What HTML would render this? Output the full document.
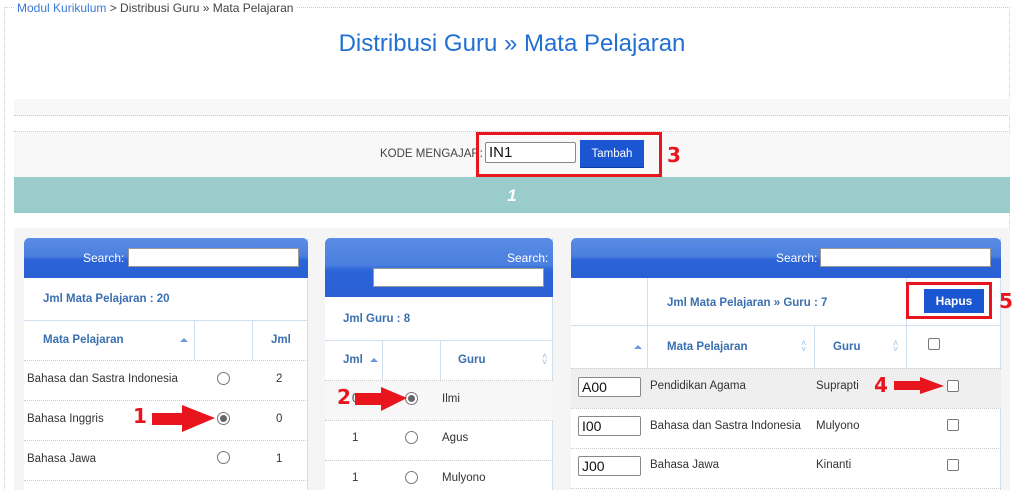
<!DOCTYPE html>
<html style="width:1024px;height:490px;overflow:hidden"><head><meta charset="utf-8">
<style>
*{box-sizing:border-box;margin:0;padding:0}
body{width:1024px;height:490px;overflow:hidden;background:#fff;font-family:"Liberation Sans",Arial,sans-serif;position:relative;font-size:12px;color:#333}
.a{position:absolute}
.hdr{background:linear-gradient(#5a8ce3 0%,#4c80e0 45%,#2c63d8 55%,#2a60d4 100%);border-radius:5px 5px 0 0}
.srch{color:#fff;font-size:12px}
.inp{background:#fff;border:1px solid #999}
.bl{color:#3a6fb0;font-weight:bold;font-size:11.5px}
.vl{border-left:1px solid #cfe0f0}
.dl{border-top:1px dotted #ccc}
.t{font-size:11.5px;color:#333}
.rad{width:13px;height:13px;border:1px solid #777;border-radius:50%;background:#fff}
.rad.on::after{content:"";position:absolute;left:2px;top:2px;width:7px;height:7px;border-radius:50%;background:#666}
.cb{width:12px;height:12px;border:1px solid #777;border-radius:2px;background:#fff}
.red{color:#e8141e;font-weight:bold;font-size:20px;font-family:"DejaVu Sans","Liberation Sans",sans-serif}
.tb{font-size:16px;color:#111;padding:2px 3px;border:1px solid #888;border-radius:2px;background:#fff}
</style></head><body>
<div class="a" style="left:4px;top:7px;width:1006px;height:483px;border:1px dotted #ccc;border-bottom:0"></div>
<div class="a" style="left:14px;top:1px;background:#fff;padding:0 3px;font-size:12px;color:#444"><span style="color:#3b79d8">Modul Kurikulum</span> &gt; Distribusi Guru » Mata Pelajaran</div>
<div class="a" style="left:0;width:1024px;top:30px;text-align:center;font-size:24px;color:#2270d4">Distribusi Guru » Mata Pelajaran</div>
<div class="a" style="left:14px;top:99px;width:996px;height:17px;background:#f8f8f8;border-bottom:1px dotted #ccc"></div>
<div class="a" style="left:14px;top:131px;width:996px;height:46px;background:#f8f8f8;border-top:1px dotted #ccc"></div>
<div class="a" style="left:380px;top:148px;font-size:11.5px;color:#444">KODE MENGAJAR:</div>
<div class="a tb" style="left:485px;top:142px;width:91px;height:21px;line-height:15px;font-size:15px">IN1</div>
<div class="a" style="left:580px;top:140px;width:64px;height:28px;background:#1a56d2;color:#fff;font-size:11.5px;text-align:center;line-height:28px;border-bottom:1px solid #0d3fa0">Tambah</div>
<div class="a" style="left:476px;top:132px;width:186px;height:45px;border:3px solid #e8141e"></div>
<div class="a red" style="left:667px;top:143px">3</div>
<div class="a" style="left:14px;top:177px;width:996px;height:36px;background:#9bcccc;color:#fff;font-weight:bold;font-style:italic;font-size:17px;text-align:center;line-height:38px">1</div>
<div class="a" style="left:14px;top:228px;width:996px;height:270px;background:#f5f5f5"></div>

<!-- left panel -->
<div class="a" style="left:24px;top:238px;width:284px;height:260px;background:#fff;border-right:1px solid #cfe0f0"></div>
<div class="a hdr" style="left:24px;top:238px;width:284px;height:40px"></div>
<div class="a srch" style="left:83px;top:251px">Search:</div>
<div class="a inp" style="left:128px;top:248px;width:171px;height:19px"></div>
<div class="a bl" style="left:43px;top:293px">Jml Mata Pelajaran : 20</div>
<div class="a" style="left:24px;top:320px;width:284px;border-top:1px solid #cfe0f0"></div>
<div class="a bl" style="left:43px;top:334px">Mata Pelajaran</div>
<div class="a" style="left:180px;top:338px;border:4px solid transparent;border-bottom:4px solid #6a9ad8;border-top:0"></div>
<div class="a vl" style="left:194px;top:320px;height:40px"></div>
<div class="a vl" style="left:252px;top:320px;height:40px"></div>
<div class="a bl" style="left:271px;top:334px">Jml</div>
<div class="a dl" style="left:24px;top:360px;width:284px"></div>
<div class="a t" style="left:27px;top:373px">Bahasa dan Sastra Indonesia</div>
<div class="a rad" style="left:217px;top:372px"></div>
<div class="a t" style="left:276px;top:373px">2</div>
<div class="a dl" style="left:24px;top:400px;width:284px"></div>
<div class="a t" style="left:27px;top:413px">Bahasa Inggris</div>
<div class="a rad on" style="left:217px;top:412px"></div>
<div class="a t" style="left:276px;top:413px">0</div>
<div class="a dl" style="left:24px;top:440px;width:284px"></div>
<div class="a t" style="left:27px;top:453px">Bahasa Jawa</div>
<div class="a rad" style="left:217px;top:451px"></div>
<div class="a t" style="left:276px;top:453px">1</div>
<div class="a dl" style="left:24px;top:480px;width:284px"></div>
<div class="a red" style="left:133px;top:404px">1</div>

<!-- middle panel -->
<div class="a" style="left:325px;top:238px;width:228px;height:260px;background:#fff;border-right:1px solid #cfe0f0"></div>
<div class="a hdr" style="left:325px;top:238px;width:228px;height:59px"></div>
<div class="a srch" style="left:507px;top:251px">Search:</div>
<div class="a inp" style="left:373px;top:268px;width:171px;height:19px"></div>
<div class="a bl" style="left:343px;top:313px">Jml Guru : 8</div>
<div class="a" style="left:325px;top:340px;width:228px;border-top:1px solid #cfe0f0"></div>
<div class="a bl" style="left:343px;top:354px">Jml</div>
<div class="a" style="left:370px;top:358px;border:4px solid transparent;border-bottom:4px solid #6a9ad8;border-top:0"></div>
<div class="a vl" style="left:382px;top:340px;height:40px"></div>
<div class="a vl" style="left:440px;top:340px;height:40px"></div>
<div class="a bl" style="left:458px;top:354px">Guru</div>
<div class="a" style="left:542px;top:353px;color:#9bbde0;font-size:9px;line-height:6px">˄<br>˅</div>
<div class="a dl" style="left:325px;top:380px;width:228px"></div>
<div class="a" style="left:325px;top:381px;width:228px;height:39px;background:#f7f7f7"></div>
<div class="a t" style="left:352px;top:393px">0</div>
<div class="a rad on" style="left:405px;top:392px"></div>
<div class="a t" style="left:442px;top:393px">Ilmi</div>
<div class="a dl" style="left:325px;top:420px;width:228px"></div>
<div class="a t" style="left:352px;top:432px">1</div>
<div class="a rad" style="left:405px;top:431px"></div>
<div class="a t" style="left:442px;top:432px">Agus</div>
<div class="a dl" style="left:325px;top:460px;width:228px"></div>
<div class="a t" style="left:352px;top:472px">1</div>
<div class="a rad" style="left:405px;top:471px"></div>
<div class="a t" style="left:442px;top:472px">Mulyono</div>
<div class="a red" style="left:337px;top:385px">2</div>

<!-- right panel -->
<div class="a" style="left:571px;top:238px;width:430px;height:260px;background:#fff;border-right:1px solid #cfe0f0"></div>
<div class="a hdr" style="left:571px;top:238px;width:430px;height:40px"></div>
<div class="a srch" style="left:776px;top:251px">Search:</div>
<div class="a inp" style="left:820px;top:248px;width:171px;height:19px"></div>
<div class="a vl" style="left:647px;top:278px;height:90px"></div>
<div class="a vl" style="left:906px;top:278px;height:90px"></div>
<div class="a bl" style="left:667px;top:297px">Jml Mata Pelajaran » Guru : 7</div>
<div class="a" style="left:924px;top:289px;width:60px;height:24px;background:#1a56d2;color:#fff;font-weight:bold;font-size:12px;text-align:center;line-height:24px">Hapus</div>
<div class="a" style="left:906px;top:282px;width:86px;height:37px;border:3px solid #e8141e"></div>
<div class="a red" style="left:999px;top:289px">5</div>
<div class="a" style="left:571px;top:325px;width:430px;border-top:1px solid #cfe0f0"></div>
<div class="a" style="left:634px;top:345px;border:4px solid transparent;border-bottom:4px solid #6a9ad8;border-top:0"></div>
<div class="a bl" style="left:667px;top:341px">Mata Pelajaran</div>
<div class="a" style="left:801px;top:340px;color:#9bbde0;font-size:9px;line-height:6px">˄<br>˅</div>
<div class="a vl" style="left:814px;top:325px;height:43px"></div>
<div class="a bl" style="left:833px;top:341px">Guru</div>
<div class="a" style="left:893px;top:340px;color:#9bbde0;font-size:9px;line-height:6px">˄<br>˅</div>
<div class="a cb" style="left:928px;top:338px"></div>
<div class="a" style="left:571px;top:368px;width:430px;height:40px;background:#efefef;border-top:1px dotted #ccc"></div>
<div class="a tb" style="left:578px;top:377px;width:63px;height:20px;line-height:14px;font-size:14px">A00</div>
<div class="a t" style="left:650px;top:380px">Pendidikan Agama</div>
<div class="a t" style="left:816px;top:380px">Suprapti</div>
<div class="a cb" style="left:947px;top:380px"></div>
<div class="a red" style="left:874px;top:373px">4</div>
<div class="a dl" style="left:571px;top:408px;width:430px"></div>
<div class="a tb" style="left:578px;top:416px;width:63px;height:20px;line-height:14px;font-size:14px">I00</div>
<div class="a t" style="left:650px;top:420px">Bahasa dan Sastra Indonesia</div>
<div class="a t" style="left:816px;top:420px">Mulyono</div>
<div class="a cb" style="left:947px;top:419px"></div>
<div class="a dl" style="left:571px;top:448px;width:430px"></div>
<div class="a tb" style="left:578px;top:456px;width:63px;height:20px;line-height:14px;font-size:14px">J00</div>
<div class="a t" style="left:650px;top:459px">Bahasa Jawa</div>
<div class="a t" style="left:816px;top:459px">Kinanti</div>
<div class="a cb" style="left:947px;top:459px"></div>
<div class="a dl" style="left:571px;top:488px;width:430px"></div>

<svg class="a" style="left:0;top:0" width="1024" height="490"><polygon fill="#e8141e" points="152,413 182,413 182,405 215,418 182,432 182,425 152,425"/>
<polygon fill="#e8141e" points="355,393 381,393 381,387 407,398 381,411 381,405 355,405"/>
<polygon fill="#e8141e" points="894,381 920,381 920,377 944,386 920,394 920,390 894,390"/></svg>
</body></html>
